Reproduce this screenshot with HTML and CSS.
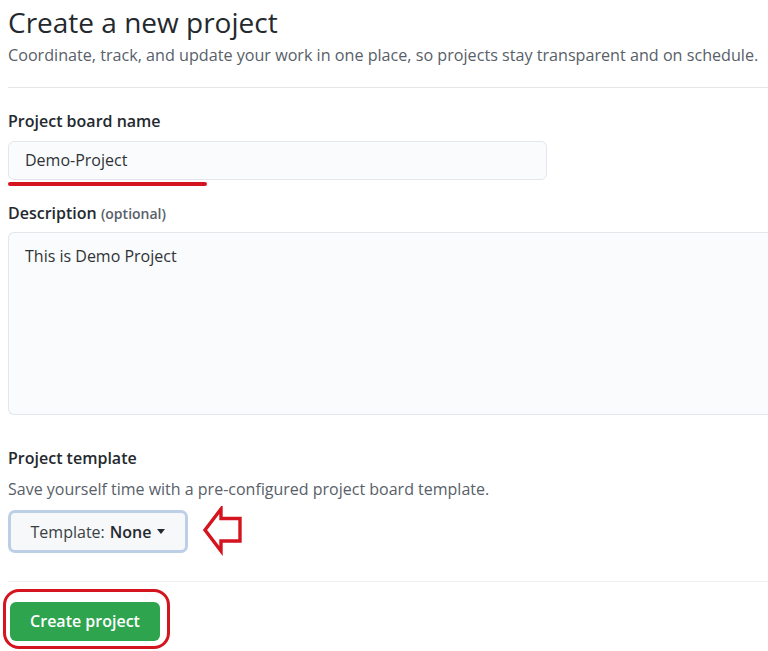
FILE: index.html
```html
<!DOCTYPE html>
<html lang="en">
<head>
<meta charset="utf-8">
<title>Create a new project</title>
<link rel="stylesheet" href="styles.css">
</head>
<body>
<div class="page">
  <h1 class="title">Create a new project</h1>
  <p class="lead">Coordinate, track, and update your work in one place, so projects stay transparent and on schedule.</p>
  <div class="divider"></div>

  <div class="group group-name">
    <label class="label">Project board name</label>
    <div class="input">Demo-Project</div>
    <div class="mark-underline"></div>
  </div>

  <div class="group group-desc">
    <label class="label">Description <span class="optional">(optional)</span></label>
    <div class="textarea">This is Demo Project</div>
  </div>

  <div class="group group-template">
    <label class="label">Project template</label>
    <p class="help">Save yourself time with a pre-configured project board template.</p>
    <div class="template-row">
      <div class="select-btn">Template: <strong>None</strong><span class="caret"></span></div>
      <svg class="arrow" width="42" height="50" viewBox="0 0 42 50">
        <path d="M3 24 L19 3 L19 12.5 L38 12.5 L38 35 L19 35 L19 45 Z" fill="none" stroke="#d4141f" stroke-width="3.4" stroke-linejoin="miter"/>
      </svg>
    </div>
  </div>

  <div class="divider divider-light"></div>

  <div class="submit-ring">
    <div class="btn-primary">Create project</div>
  </div>
</div>
</body>
</html>
```

FILE: styles.css
```css
html, body {
  margin: 0;
  padding: 0;
  background: #ffffff;
  overflow: hidden;
}
body {
  font-family: "Open Sans", "Noto Sans", sans-serif;
  color: #24292e;
}
.page {
  width: 760px;
  padding: 2px 0 0 8px;
}
.title {
  margin: 0;
  font-size: 28px;
  font-weight: 400;
  line-height: 40px;
  color: #24292e;
}
.lead {
  margin: 0;
  font-size: 16.15px;
  line-height: 26px;
  color: #586069;
  white-space: nowrap;
}
.divider {
  height: 1px;
  background: #e4e6e8;
  margin-top: 19px;
}
.group-name {
  padding-top: 21px;
}
.label {
  display: block;
  font-size: 16px;
  font-weight: 600;
  line-height: 24px;
  color: #24292e;
}
.optional {
  font-size: 14px;
  color: #586069;
}
.input {
  margin-top: 8px;
  height: 37px;
  border: 1px solid #e3e6ea;
  border-radius: 6px;
  background: #fafbfc;
  font-size: 16px;
  line-height: 37px;
  padding: 0 0 0 16px;
  width: 521px;
  color: #2f3337;
}
.mark-underline {
  margin-top: 2px;
  width: 199px;
  height: 4px;
  border-radius: 2px;
  background: #d4141f;
}
.group-desc {
  padding-top: 15px;
}
.textarea {
  margin-top: 6px;
  height: 183px;
  border: 1px solid #e3e6ea;
  border-right: none;
  border-radius: 6px 0 0 6px;
  background: #fafbfc;
  font-size: 16px;
  line-height: 24px;
  padding: 11px 16px;
  box-sizing: border-box;
  width: 100%;
  color: #2f3337;
}
.group-template {
  padding-top: 31px;
}
.help {
  margin: 7px 0 0;
  font-size: 16px;
  line-height: 24px;
  color: #586069;
}
.template-row {
  margin-top: 9px;
  height: 43px;
  display: flex;
  align-items: flex-start;
  gap: 14px;
}
.select-btn {
  box-sizing: border-box;
  width: 180px;
  height: 43px;
  border: 3px solid #bccfe6;
  border-radius: 7px;
  background: #f6f8fa;
  display: flex;
  align-items: center;
  justify-content: center;
  font-size: 16px;
  color: #3a3f44;
}
.select-btn strong {
  font-weight: 600;
  color: #24292e;
  margin-left: 5px;
}
.caret {
  display: inline-block;
  margin-left: 6px;
  width: 0;
  height: 0;
  border-left: 4.5px solid transparent;
  border-right: 4.5px solid transparent;
  border-top: 5px solid #24292e;
}
.arrow {
  display: block;
  margin-top: -4px;
}
.divider-light {
  margin-top: 28px;
  background: #efefef;
}
.submit-ring {
  margin: 7px 0 0 -5px;
  border: 3px solid #d4141f;
  border-radius: 16px;
  padding: 10px 0 0 4px;
  width: 157px;
  height: 44px;
}
.btn-primary {
  width: 150px;
  height: 39px;
  border-radius: 6px;
  background: #2ea44f;
  color: #ffffff;
  font-size: 16px;
  font-weight: 600;
  line-height: 39px;
  text-align: center;
}
```
